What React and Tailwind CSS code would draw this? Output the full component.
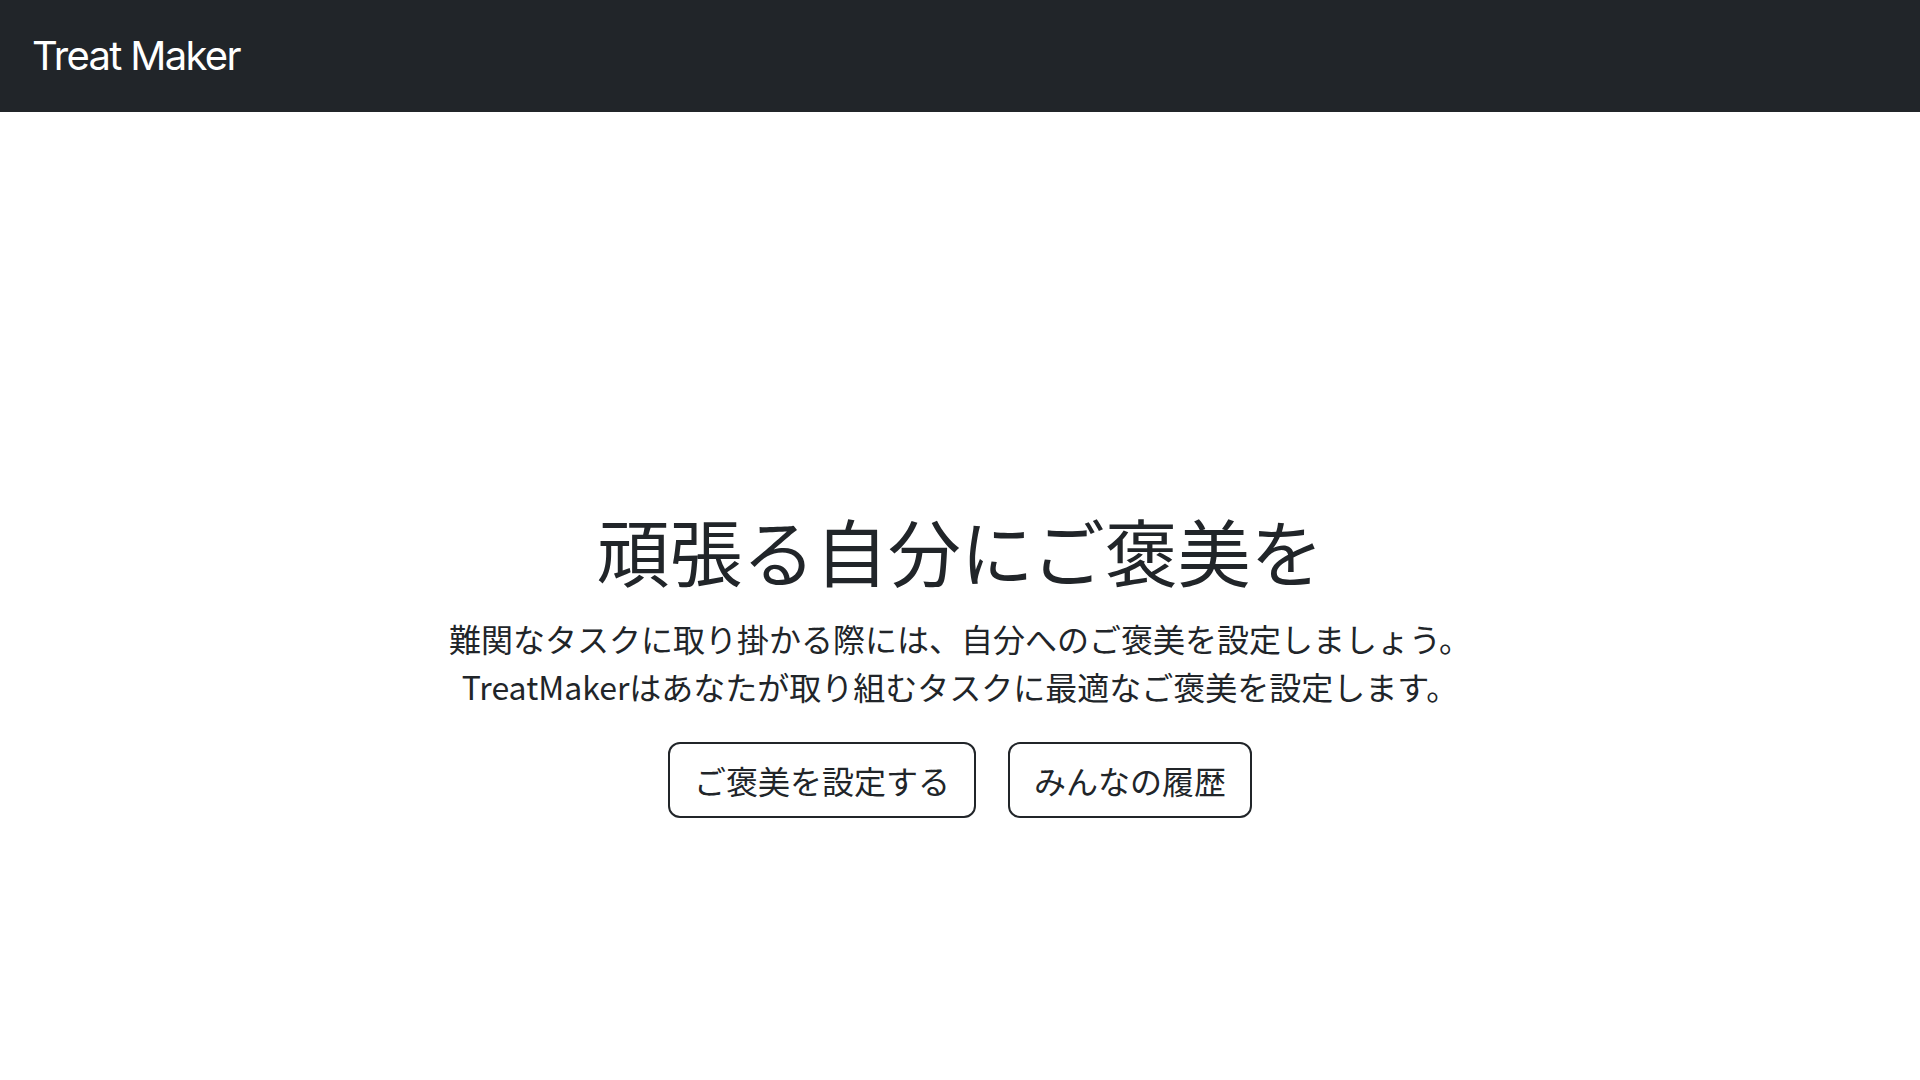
export default function App() {
  return (
    <div
      className="min-h-screen bg-white text-[#212529]"
      style={{ fontFamily: 'Inter, "Noto Sans CJK JP", sans-serif' }}
    >
      {/* Navbar */}
      <nav className="bg-[#212529] h-[112px] flex items-center px-[32px]">
        <a href="#" className="text-white text-[40px] leading-[60px] tracking-[-1.7px]">
          Treat Maker
        </a>
      </nav>

      {/* Hero */}
      <main
        className="flex flex-col items-center text-center pt-[394px]"
        style={{ fontFamily: '"Noto Sans CJK JP", sans-serif' }}
      >
        <h1 className="text-[72.8px] leading-[1.2] font-normal mb-[21px]">
          頑張る自分にご褒美を
        </h1>
        <p className="text-[32px] leading-[48px] mb-[32px]">
          難関なタスクに取り掛かる際には、自分へのご褒美を設定しましょう。
          <br />
          TreatMakerはあなたが取り組むタスクに最適なご褒美を設定します。
        </p>
        <div className="flex gap-[32px]">
          <button className="border-2 border-[#212529] rounded-[12px] px-[24px] py-[12px] text-[32px] leading-[48px]">
            ご褒美を設定する
          </button>
          <button className="border-2 border-[#212529] rounded-[12px] px-[24px] py-[12px] text-[32px] leading-[48px]">
            みんなの履歴
          </button>
        </div>
      </main>
    </div>
  );
}
